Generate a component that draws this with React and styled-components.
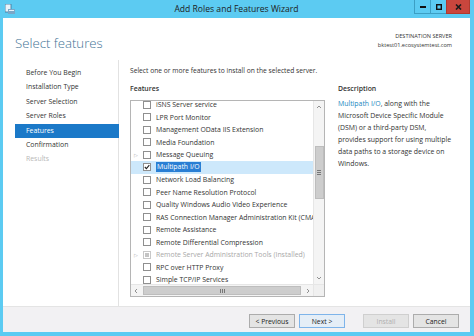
import React from 'react'
import styled, { createGlobalStyle } from 'styled-components'

const Global = createGlobalStyle`
body{
  margin:0;
  font-family:"Open Sans","Noto Sans",sans-serif;
}
`;

const Frame = styled.div`
width:474px;
height:336px;
box-sizing:border-box;
background-color:#5ccbf2;
padding:0 4px 4px 3px;
display:flex;
flex-direction:column;
overflow:hidden;
`;
const TitleBar = styled.div`
height:18px;
display:flex;
align-items:flex-start;
position:relative;
`;
const AppIcon = styled.svg`
margin:4px 0 0 2px;
`;
const Title = styled.div`
position:absolute;
left:0;
right:0;
top:3px;
text-align:center;
font-size:8.6px;
color:#1c1c1c;
`;
const Controls = styled.div`
margin-left:auto;
display:flex;
`;
const Ctl = styled.div`
width:${p => p.wide ? '24px' : '17px'};
height:14px;
box-sizing:border-box;
border:1px solid ${p => p.close ? '#b03a2e' : '#3c9fc4'};
border-top:none;
margin-left:-1px;
background-color:${p => p.close ? '#c9463d' : 'transparent'};
display:flex;
align-items:center;
justify-content:center;
`;
const Body = styled.div`
flex:1;
background:white;
display:flex;
flex-direction:column;
`;
const Header = styled.div`
height:42px;
display:flex;
justify-content:space-between;
padding:0 18px 0 12px;
`;
const Heading = styled.h1`
margin:16px 0 0;
font-size:13.2px;
font-weight:300;
color:#3f7396;
`;
const Dest = styled.div`
margin-top:14px;
text-align:right;
font-size:5.6px;
line-height:9px;
color:#333;
`;
const Main = styled.div`
flex:1;
display:flex;
`;
const Nav = styled.div`
width:103px;
margin-left:12px;
padding-top:6px;
border-right:1px solid #e2e2e2;
`;
const NavItem = styled.div`
height:14.4px;
line-height:14.4px;
padding-left:11px;
font-size:6.9px;
margin-right:-1px;
color:${p => p.active ? 'white' : p.dim ? '#b8b8b8' : '#333'};
background-color:${p => p.active ? '#1b79c8' : 'transparent'};
`;
const Content = styled.div`
width:195px;
margin-left:11px;
display:flex;
flex-direction:column;
`;
const Text = styled.div`
font-size:6.9px;
line-height:10px;
color:#333;
`;
const Intro = styled(Text)`
margin-top:6px;
font-size:6.7px;
white-space:nowrap;
`;
const Label = styled(Text)`
margin-top:8px;
font-weight:600;
`;
const ListBox = styled.div`
margin-top:6px;
height:197px;
box-sizing:border-box;
border:1px solid #b5b5b5;
display:grid;
grid-template-columns:1fr 11px;
grid-template-rows:1fr 12px;
`;
const Rows = styled.div`
overflow:hidden;
`;
const RowList = styled.div`
margin-top:-2.5px;
`;
const Row = styled.div`
height:12.5px;
display:flex;
align-items:center;
white-space:nowrap;
font-size:6.9px;
color:${p => p.dim ? '#a8a8a8' : '#333'};
background-color:${p => p.selected ? '#cde8fb' : 'transparent'};
`;
const Expander = styled.span`
width:12px;
flex:none;
font-size:5px;
color:#aaa;
padding-left:3px;
box-sizing:border-box;
`;
const Check = styled.span`
width:8px;
height:8px;
flex:none;
box-sizing:border-box;
border:1px solid ${p => p.dim ? '#c8c8c8' : '#8f8f8f'};
margin-right:5px;
display:flex;
align-items:center;
justify-content:center;
background:white;
`;
const Fill = styled.span`
width:4px;
height:4px;
background:#c4c4c4;
`;
const Sel = styled.span`
background-color:#2a7fd4;
color:white;
padding:0 1px;
line-height:10px;
`;
const VBar = styled.div`
border-left:1px solid #e6e6e6;
background:#f4f4f4;
display:flex;
flex-direction:column;
align-items:center;
`;
const Arrow = styled.div`
height:12px;
width:${p => p.narrow ? '10px' : '100%'};
margin-top:${p => p.end ? 'auto' : '0'};
flex:none;
display:flex;
align-items:center;
justify-content:center;
`;
const VThumb = styled.div`
margin-top:${p => p.offset}px;
width:9px;
height:53px;
background:#cdcdcd;
border:1px solid #bdbdbd;
box-sizing:border-box;
display:flex;
align-items:center;
justify-content:center;
`;
const HBar = styled.div`
border-top:1px solid #e6e6e6;
background:#f4f4f4;
display:flex;
align-items:center;
`;
const HThumb = styled.div`
flex:1;
height:9px;
margin:0 2px;
background:#cdcdcd;
border:1px solid #bdbdbd;
box-sizing:border-box;
display:flex;
align-items:center;
justify-content:center;
`;
const Corner = styled.div`
background:#f0f0f0;
border-top:1px solid #e6e6e6;
border-left:1px solid #e6e6e6;
`;
const Desc = styled.div`
margin-left:13px;
padding-top:16px;
width:122px;
`;
const DescText = styled(Text)`
margin-top:4px;
line-height:12px;
white-space:nowrap;
`;
const LinkWord = styled.span`
color:#1a87c0;
`;
const Footer = styled.div`
height:26px;
box-sizing:border-box;
background:#f2f1f3;
border-top:1px solid #e4e4e4;
display:flex;
justify-content:flex-end;
align-items:flex-start;
padding:7px 11px 0 0;
`;
const Button = styled.button`
width:46px;
height:14px;
padding:0;
margin-left:${p => p.gap || 4}px;
font-family:inherit;
font-size:6.8px;
color:${p => p.disabled ? '#b0b0b0' : '#222'};
background:${p => p.primary ? '#e5eef7' : '#e4e4e4'};
border:1px solid ${p => p.primary ? '#7eb4ea' : p.disabled ? '#cfcfcf' : '#acacac'};
`;

const grip = (w, h, vertical) => (
  <svg width={w} height={h}>
    {[0, 2, 4].map(i => vertical
      ? <rect key={i} x="0" y={i} width={w} height="1" fill="#777" />
      : <rect key={i} x={i} y="0" width="1" height={h} fill="#777" />)}
  </svg>
)

const Chevron = styled.svg`
transform:rotate(${p => p.rot}deg);
`;
const chev = (rot) => (
  <Chevron rot={rot} width="6" height="6" viewBox="0 0 6 6">
    <path d="M1 4 L3 2 L5 4" fill="none" stroke="#777" strokeWidth="0.8" />
  </Chevron>
)

const features = [
  { name: 'iSNS Server service' },
  { name: 'LPR Port Monitor' },
  { name: 'Management OData IIS Extension' },
  { name: 'Media Foundation' },
  { name: 'Message Queuing', tree: true },
  { name: 'Multipath I/O', checked: true },
  { name: 'Network Load Balancing' },
  { name: 'Peer Name Resolution Protocol' },
  { name: 'Quality Windows Audio Video Experience' },
  { name: 'RAS Connection Manager Administration Kit (CMAK)' },
  { name: 'Remote Assistance' },
  { name: 'Remote Differential Compression' },
  { name: 'Remote Server Administration Tools (Installed)', tree: true, installed: true },
  { name: 'RPC over HTTP Proxy' },
  { name: 'Simple TCP/IP Services' },
  { name: 'SMTP Server' },
]

const steps = ['Before You Begin', 'Installation Type', 'Server Selection', 'Server Roles', 'Features', 'Confirmation', 'Results']

const App = () => {
  return (
    <>
      <Global />
      <Frame>
        <TitleBar>
          <AppIcon width="10" height="10" viewBox="0 0 10 10">
            <rect x="0" y="0" width="6" height="8" fill="#e8f4fb" stroke="#3b6f95" strokeWidth="0.8" />
            <rect x="3" y="5" width="7" height="5" fill="#7aa7c8" />
            <rect x="4" y="6" width="5" height="1" fill="#e8f4fb" />
          </AppIcon>
          <Title>Add Roles and Features Wizard</Title>
          <Controls>
            <Ctl><svg width="6" height="3"><rect width="6" height="2" y="1" fill="#111" /></svg></Ctl>
            <Ctl><svg width="6" height="6"><rect x="0.7" y="0.7" width="4.6" height="4.6" fill="none" stroke="#111" strokeWidth="1.4" /></svg></Ctl>
            <Ctl wide close><svg width="7" height="6"><path d="M1 0.5 L6 5.5 M6 0.5 L1 5.5" stroke="#1a1a1a" strokeWidth="1.6" /></svg></Ctl>
          </Controls>
        </TitleBar>
        <Body>
          <Header>
            <Heading>Select features</Heading>
            <Dest>
              <div>DESTINATION SERVER</div>
              <div>bktest01.ecosystemtest.com</div>
            </Dest>
          </Header>
          <Main>
            <Nav>
              {steps.map(s => (
                <NavItem key={s} active={s === 'Features'} dim={s === 'Results'}>{s}</NavItem>
              ))}
            </Nav>
            <Content>
              <Intro>Select one or more features to install on the selected server.</Intro>
              <Label>Features</Label>
              <ListBox>
                <Rows>
                  <RowList>
                    {features.map(f => (
                      <Row key={f.name} selected={f.checked} dim={f.installed}>
                        <Expander>{f.tree ? '▷' : ''}</Expander>
                        <Check dim={f.installed}>
                          {f.checked && (
                            <svg width="6" height="6" viewBox="0 0 6 6">
                              <path d="M0.8 3 L2.4 4.6 L5.3 1.2" fill="none" stroke="#222" strokeWidth="1.1" />
                            </svg>
                          )}
                          {f.installed && <Fill />}
                        </Check>
                        {f.checked ? <Sel>{f.name}</Sel> : f.name}
                      </Row>
                    ))}
                  </RowList>
                </Rows>
                <VBar>
                  <Arrow>{chev(0)}</Arrow>
                  <VThumb offset={33}>{grip(4, 5, true)}</VThumb>
                  <Arrow end>{chev(180)}</Arrow>
                </VBar>
                <HBar>
                  <Arrow narrow>{chev(-90)}</Arrow>
                  <HThumb>{grip(5, 4, false)}</HThumb>
                  <Arrow narrow>{chev(90)}</Arrow>
                </HBar>
                <Corner />
              </ListBox>
            </Content>
            <Desc>
              <Label>Description</Label>
              <DescText>
                <LinkWord>Multipath I/O</LinkWord>, along with the<br />
                Microsoft Device Specific Module<br />
                (DSM) or a third-party DSM,<br />
                provides support for using multiple<br />
                data paths to a storage device on<br />
                Windows.
              </DescText>
            </Desc>
          </Main>
          <Footer>
            <Button>&lt; Previous</Button>
            <Button primary>Next &gt;</Button>
            <Button disabled gap={18}>Install</Button>
            <Button>Cancel</Button>
          </Footer>
        </Body>
      </Frame>
    </>
  )
}

export default App
